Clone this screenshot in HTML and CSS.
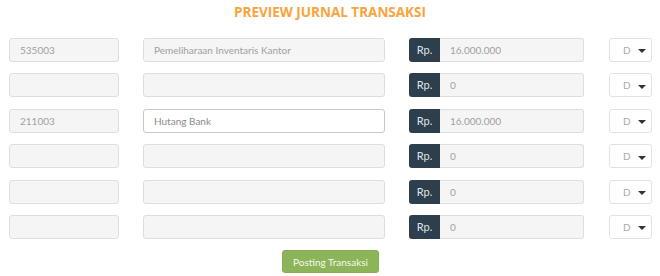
FILE: index.html
```html
<!DOCTYPE html>
<html lang="id">
<head>
    <meta charset="UTF-8">
    <title>Preview Jurnal Transaksi</title>
    <link rel="stylesheet" href="styles.css">
</head>
<body>
    <h3 class="title">PREVIEW JURNAL TRANSAKSI</h3>
    <div class="jurnal">
        <div class="row">
            <input class="akun" type="text" value="535003" readonly>
            <input class="nama" type="text" value="Pemeliharaan Inventaris Kantor" readonly>
            <div class="nominal"><span class="addon">Rp.</span><input type="text" value="16.000.000" readonly></div>
            <div class="posisi">D <span class="caret"></span></div>
        </div>
        <div class="row">
            <input class="akun" type="text" readonly>
            <input class="nama" type="text" readonly>
            <div class="nominal"><span class="addon">Rp.</span><input type="text" value="0" readonly></div>
            <div class="posisi">D <span class="caret"></span></div>
        </div>
        <div class="row">
            <input class="akun" type="text" value="211003" readonly>
            <input class="nama edit" type="text" value="Hutang Bank">
            <div class="nominal"><span class="addon">Rp.</span><input type="text" value="16.000.000" readonly></div>
            <div class="posisi">D <span class="caret"></span></div>
        </div>
        <div class="row">
            <input class="akun" type="text" readonly>
            <input class="nama" type="text" readonly>
            <div class="nominal"><span class="addon">Rp.</span><input type="text" value="0" readonly></div>
            <div class="posisi">D <span class="caret"></span></div>
        </div>
        <div class="row">
            <input class="akun" type="text" readonly>
            <input class="nama" type="text" readonly>
            <div class="nominal"><span class="addon">Rp.</span><input type="text" value="0" readonly></div>
            <div class="posisi">D <span class="caret"></span></div>
        </div>
        <div class="row">
            <input class="akun" type="text" readonly>
            <input class="nama" type="text" readonly>
            <div class="nominal"><span class="addon">Rp.</span><input type="text" value="0" readonly></div>
            <div class="posisi">D <span class="caret"></span></div>
        </div>
    </div>
    <div class="aksi">
        <button class="btn-posting">Posting Transaksi</button>
    </div>
</body>
</html>
```
FILE: styles.css
```css
body {
    margin: 0;
    background-color: #ffffff;
    font-family: Lato, "Open Sans", Arial, sans-serif;
    color: #999;
}
.title {
    margin: 0;
    padding-top: 3px;
    height: 35px;
    text-align: center;
    font-family: "Open Sans", Arial, sans-serif;
    font-size: 13.5px;
    font-weight: 700;
    color: #f9a33c;
    line-height: 18px;
}
.jurnal {
    display: flex;
    flex-direction: column;
    gap: 11.4px;
    padding-left: 9px;
}
.row {
    display: flex;
    align-items: center;
    height: 24px;
}
input {
    box-sizing: border-box;
    height: 24px;
    margin: 0;
    padding: 0 10px;
    font-family: Lato, "Open Sans", Arial, sans-serif;
    font-size: 10px;
    color: #a0a0a0;
    background-color: #f5f5f5;
    border: 1px solid #dedede;
    border-radius: 3px;
    outline: none;
}
.akun {
    width: 110px;
}
.nama {
    width: 242px;
    margin-left: 24px;
}
.nama.edit {
    background-color: #fff;
    border-color: #c8c8c8;
    color: #8a8a8a;
}
.nominal {
    display: flex;
    width: 175px;
    margin-left: 24px;
}
.nominal .addon {
    width: 31px;
    height: 24px;
    line-height: 24px;
    text-align: center;
    font-size: 11px;
    color: #dfe5ea;
    background-color: #2d3e4d;
    border-radius: 3px 0 0 3px;
}
.nominal input {
    flex: 1;
    width: 0;
    border-left: none;
    border-radius: 0 3px 3px 0;
}
.posisi {
    box-sizing: border-box;
    width: 43px;
    height: 24px;
    margin-left: 25px;
    padding-left: 13px;
    line-height: 23px;
    font-size: 10px;
    color: #aaa;
    background-color: #fff;
    border: 1px solid #e2e2e2;
    border-radius: 3px;
}
.caret {
    display: inline-block;
    margin-left: 5px;
    vertical-align: middle;
    border-top: 4px solid #333;
    border-left: 4px solid transparent;
    border-right: 4px solid transparent;
}
.aksi {
    display: flex;
    padding-top: 11.5px;
    padding-left: 282px;
}
.btn-posting {
    width: 97px;
    height: 23px;
    padding: 0;
    font-family: Lato, "Open Sans", Arial, sans-serif;
    font-size: 10px;
    color: #f4f9ee;
    background-color: #8cb559;
    border: 1px solid #86ad54;
    border-radius: 3px;
    cursor: pointer;
}
```
